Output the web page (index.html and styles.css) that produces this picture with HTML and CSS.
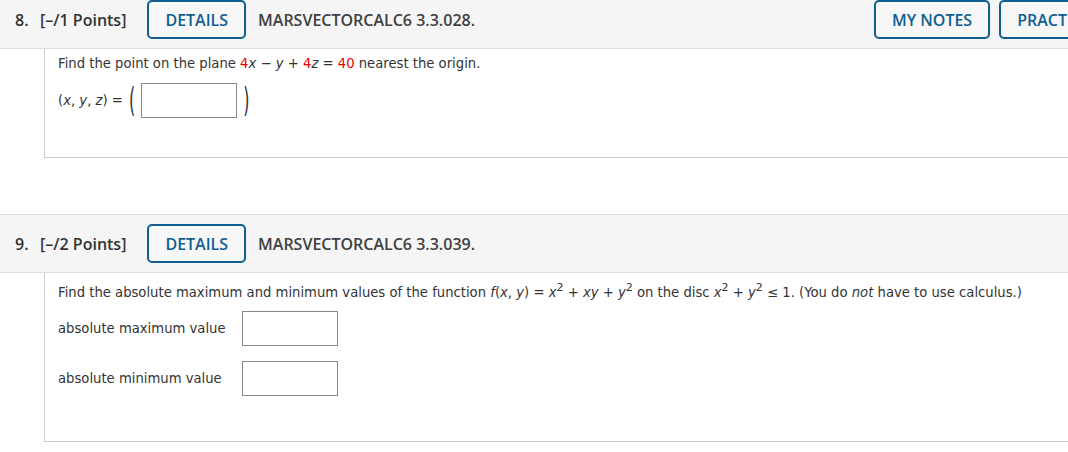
FILE: index.html
```html
<!DOCTYPE html>
<html lang="en">
<head>
    <meta charset="UTF-8">
    <title>Assignment</title>
    <link rel="stylesheet" href="styles.css">
</head>
<body>
    <div class="page">
        <section class="question first">
            <div class="q-header">
                <span class="q-num">8.</span>
                <span class="q-points">[&ndash;/1 Points]</span>
                <button class="btn">DETAILS</button>
                <span class="q-code">MARSVECTORCALC6 3.3.028.</span>
                <button class="btn">MY NOTES</button>
                <button class="btn">PRACTICE ANOTHER</button>
            </div>
            <div class="q-body">
                <p class="q-text">Find the point on the plane <span class="red">4</span><i>x</i> &minus; <i>y</i> + <span class="red">4</span><i>z</i> = <span class="red">40</span> nearest the origin.</p>
                <div class="point-row">
                    <span>(<i>x</i>, <i>y</i>, <i>z</i>) =</span>
                    <span class="paren">(</span>
                    <input class="answer" type="text">
                    <span class="paren">)</span>
                </div>
            </div>
        </section>

        <section class="question">
            <div class="q-header">
                <span class="q-num">9.</span>
                <span class="q-points">[&ndash;/2 Points]</span>
                <button class="btn">DETAILS</button>
                <span class="q-code">MARSVECTORCALC6 3.3.039.</span>
            </div>
            <div class="q-body tall">
                <p class="q-text">Find the absolute maximum and minimum values of the function <i>f</i>(<i>x</i>, <i>y</i>) = <i>x</i><sup>2</sup> + <i>xy</i> + <i>y</i><sup>2</sup> on the disc <i>x</i><sup>2</sup> + <i>y</i><sup>2</sup> &le; 1. (You do <i>not</i> have to use calculus.)</p>
                <div class="answer-grid">
                    <label>absolute maximum value</label>
                    <input class="answer" type="text">
                    <label>absolute minimum value</label>
                    <input class="answer" type="text">
                </div>
            </div>
        </section>
    </div>
</body>
</html>
```

FILE: styles.css
```css
html, body {
    margin: 0;
    padding: 0;
    overflow: hidden;
    background: #fff;
}

.page {
    width: 1213px;
    margin-top: -10px;
    font-family: "DejaVu Sans", Verdana, sans-serif;
    font-size: 13.2px;
    color: #333;
}

.question {
    margin-bottom: 56px;
}

.q-header {
    display: flex;
    align-items: center;
    background: #f5f5f5;
    border-top: 1px solid #dcdcdc;
    border-bottom: 1px solid #dcdcdc;
    padding: 9px 15px;
    font-family: "Open Sans", sans-serif;
    font-size: 16px;
    font-weight: 600;
    color: #333;
}

.q-num {
    width: 25px;
}

.q-points {
    margin-right: 21px;
}

.btn {
    height: 39px;
    padding: 0 16px;
    border: 2px solid #0e5e90;
    border-radius: 5px;
    background: #f7f7f7;
    color: #0e5e90;
    font-family: "Open Sans", sans-serif;
    font-size: 16px;
    font-weight: 600;
    margin-right: 9px;
}

.q-code {
    flex: 1;
    margin-left: 3px;
    color: #404040;
}

.q-body {
    margin-left: 44px;
    border-left: 1px solid #ccc;
    border-bottom: 1px solid #ccc;
    padding: 7px 13px 39px;
}

.q-body.tall {
    padding-top: 12px;
    padding-bottom: 45px;
}

.q-text {
    margin: 0;
    line-height: 16px;
}

.red {
    color: #e00;
}

sup {
    font-size: 11px;
    line-height: 0;
    vertical-align: 6px;
}

.point-row {
    display: flex;
    align-items: center;
    margin-top: 11px;
}

.paren {
    display: inline-block;
    font-size: 16px;
    transform: scaleY(2.1);
    margin: 0 6px;
    color: #333;
}

.answer {
    width: 96px;
    height: 35px;
    box-sizing: border-box;
    border: 1px solid #888;
    margin: 0;
    padding: 0;
    background: #fff;
}

.answer-grid {
    display: grid;
    grid-template-columns: 184px 96px;
    align-items: center;
    row-gap: 15px;
    margin-top: 10px;
}
```
